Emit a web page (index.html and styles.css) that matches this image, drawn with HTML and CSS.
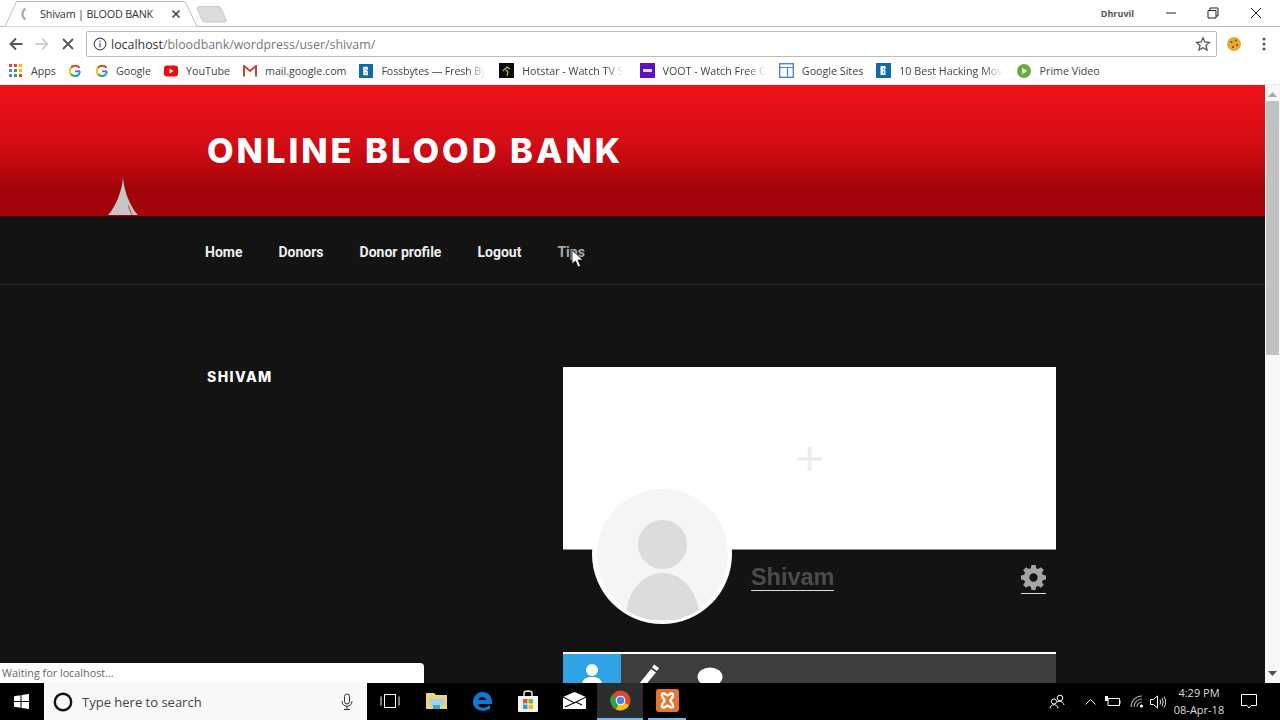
FILE: index.html
```html
<!DOCTYPE html>
<html lang="en">
<head>
<meta charset="utf-8">
<title>Shivam | BLOOD BANK</title>
<link rel="stylesheet" href="styles.css">
</head>
<body>
<div class="screen">
  <div class="chrome">
    <div class="tabstrip">
      <svg class="tabshape" width="232" height="27" viewBox="0 0 232 27"><path d="M0 26.500H5L16.500 1.500H185L197 26.500" fill="#fff" stroke="#bdbdbd"/><path d="M197 8.500a2 2 0 0 1 2-2H218q2 0 3 2l5 11q1 2.500-2 2.500H205q-2 0-3-2z" fill="#dcdcdc" stroke="#c8c8c8"/></svg>
      <div class="tab">
        <svg class="spinner" width="16" height="16" viewBox="0 0 16 16"><path d="M11.500 2.500A6.500 6.500 0 0 0 11.500 13.500" fill="none" stroke="#adb1b5" stroke-width="2.400"/></svg>
        <span class="tabtitle">Shivam | BLOOD BANK</span>
        <svg class="tabclose" width="10" height="10" viewBox="0 0 10 10"><path d="M1.500 1.500l7 7M8.500 1.500l-7 7" stroke="#444" stroke-width="1.600"/></svg>
      </div>
      <div class="winbar">
        <span class="user">Dhruvil</span>
        <span class="winbtn winbtn-min"><svg width="12" height="2" viewBox="0 0 12 2"><path d="M1 1h10" stroke="#222" stroke-width="1"/></svg></span>
        <span class="winbtn"><svg width="12" height="12" viewBox="0 0 12 12"><path d="M3 3V1h8v8H9M1 3.500h8v7.500H1z" fill="none" stroke="#222"/></svg></span>
        <span class="winbtn"><svg width="12" height="12" viewBox="0 0 12 12"><path d="M1 1l10 10M11 1L1 11" stroke="#222"/></svg></span>
      </div>
    </div>
    <div class="toolbar">
      <svg class="navicon" width="16" height="16" viewBox="0 0 16 16"><path d="M14.500 8H2.500M8 2.500L2.500 8 8 13.500" fill="none" stroke="#555" stroke-width="1.800"/></svg>
      <svg class="navicon" width="16" height="16" viewBox="0 0 16 16"><path d="M1.500 8h12M8 2.500L13.500 8 8 13.500" fill="none" stroke="#d2d2d2" stroke-width="1.800"/></svg>
      <svg class="navicon" width="16" height="16" viewBox="0 0 16 16"><path d="M3 3l10 10M13 3L3 13" fill="none" stroke="#555" stroke-width="1.800"/></svg>
      <div class="omnibox">
        <svg width="14" height="14" viewBox="0 0 14 14"><circle cx="7" cy="7" r="5.800" fill="none" stroke="#555" stroke-width="1.200"/><path d="M7 6v4.200M7 3.700v1.300" stroke="#555" stroke-width="1.300"/></svg>
        <span class="url"><span class="host">localhost</span>/bloodbank/wordpress/user/shivam/</span>
        <svg class="star" width="16" height="16" viewBox="0 0 16 16"><path d="M8 1.800l1.900 4.200 4.500.5-3.400 3 1 4.500L8 11.700l-4 2.300 1-4.500-3.400-3 4.500-.5z" fill="none" stroke="#555" stroke-width="1.300"/></svg>
      </div>
      <svg class="cookie" width="16" height="16" viewBox="0 0 16 16"><circle cx="8" cy="8" r="7" fill="#e8a63c"/><circle cx="5.500" cy="6" r="1" fill="#7a3d10"/><circle cx="10" cy="4.500" r=".9" fill="#7a3d10"/><circle cx="11" cy="9" r="1" fill="#7a3d10"/><circle cx="7" cy="11" r="1" fill="#7a3d10"/></svg>
      <svg class="menu" width="4" height="14" viewBox="0 0 4 14"><circle cx="2" cy="2" r="1.500" fill="#555"/><circle cx="2" cy="7" r="1.500" fill="#555"/><circle cx="2" cy="12" r="1.500" fill="#555"/></svg>
    </div>
    <div class="bookmarks">
      <span class="bm"><svg width="14" height="14" viewBox="0 0 14 14"><g><rect x="0" y="0" width="3" height="3" fill="#e94335"/><rect x="5" y="0" width="3" height="3" fill="#e94335"/><rect x="10" y="0" width="3" height="3" fill="#fbbc05"/><rect x="0" y="5" width="3" height="3" fill="#4285f4"/><rect x="5" y="5" width="3" height="3" fill="#34a853"/><rect x="10" y="5" width="3" height="3" fill="#fbbc05"/><rect x="0" y="10" width="3" height="3" fill="#4285f4"/><rect x="5" y="10" width="3" height="3" fill="#34a853"/><rect x="10" y="10" width="3" height="3" fill="#ea4335"/></g></svg><span>Apps</span></span>
      <span class="bm bm-g"><svg width="12" height="12" viewBox="0 0 12 12"><use href="#gicon"/></svg></span>
      <span class="bm"><svg width="12" height="12" viewBox="0 0 12 12"><defs><g id="gicon"><path d="M10.500 2.800A5.300 5.300 0 0 0 2 2.800" fill="none" stroke="#ea4335" stroke-width="2"/><path d="M2 2.600A5.300 5.300 0 0 0 2 9.400" fill="none" stroke="#fbbc05" stroke-width="2"/><path d="M2 9.200A5.300 5.300 0 0 0 9.800 9.500" fill="none" stroke="#34a853" stroke-width="2"/><path d="M6 6.200h5M10.800 6.200A5.300 5.300 0 0 1 9.600 9.600" fill="none" stroke="#4285f4" stroke-width="2"/></g></defs><use href="#gicon"/></svg><span>Google</span></span>
      <span class="bm"><svg width="14" height="12" viewBox="0 0 14 12"><rect width="14" height="11" y=".5" rx="3" fill="#e8100e"/><path d="M5.500 3.500l4 2.500-4 2.500z" fill="#fff"/></svg><span>YouTube</span></span>
      <span class="bm"><svg width="14" height="12" viewBox="0 0 14 12"><path d="M1 11.500V1l6 5 6-5v10.500" fill="none" stroke="#c0493c" stroke-width="2"/></svg><span>mail.google.com</span></span>
      <span class="bm"><svg width="14" height="14" viewBox="0 0 15 15"><use href="#bicon"/></svg><span class="fade tight">Fossbytes — Fresh By</span></span>
      <span class="bm bm-hot"><svg width="15" height="15" viewBox="0 0 15 15"><rect width="15" height="15" fill="#0b0b0b"/><path d="M4 8l4-4 3 2M7 7l2 2-1 4" fill="none" stroke="#b9c23a" stroke-width="1.200"/></svg><span class="fade">Hotstar - Watch TV S</span></span>
      <span class="bm"><svg width="15" height="15" viewBox="0 0 15 15"><rect width="15" height="15" fill="#5a12c4"/><rect x="3" y="6" width="9" height="3" fill="#e4d8f6"/></svg><span class="fade">VOOT - Watch Free C</span></span>
      <span class="bm"><svg width="15" height="15" viewBox="0 0 15 15"><rect x=".7" y=".7" width="13.600" height="13.600" fill="#fff" stroke="#4a86d8" stroke-width="1.400"/><path d="M1 4.500h13M8.500 4.500V14" stroke="#4a86d8" stroke-width="1.200"/></svg><span>Google Sites</span></span>
      <span class="bm"><svg width="15" height="15" viewBox="0 0 15 15"><defs><g id="bicon"><rect width="15" height="15" fill="#0f6aa8"/><path d="M4.500 3h5v3.500h-1v1h1V12h-5zM7 5v1.500h1V5zM7 8.500V10h1V8.500z" fill="#fff" fill-rule="evenodd"/></g></defs><use href="#bicon"/></svg><span class="fade">10 Best Hacking Mov</span></span>
      <span class="bm bm-prime"><svg width="14" height="14" viewBox="0 0 14 14"><circle cx="7" cy="7" r="7" fill="#6aa83a"/><path d="M5.200 3.800l5 3.200-5 3.200z" fill="#fff"/></svg><span>Prime Video</span></span>
    </div>
  </div>

  <div class="viewport">
    <div class="page">
      <header class="banner">
        <svg class="spire" width="32" height="40" viewBox="0 0 32 40"><path d="M16 0C17 16 25 32 31 38H1C7 32 15 16 16 0z" fill="#c6c6c6"/><path d="M21 28l4 10" stroke="#a33" stroke-width=".8"/></svg>
        <h1 class="sitetitle">ONLINE BLOOD BANK</h1>
      </header>
      <nav class="mainnav">
        <a>Home</a><a>Donors</a><a>Donor profile</a><a>Logout</a><a class="dim">Tips</a>
      </nav>
      <main class="content">
        <h2 class="pagetitle">SHIVAM</h2>
        <section class="profile">
          <div class="cover"><span class="plus">+</span></div>
          <div class="identity">
            <div class="avatar">
              <svg width="131" height="131" viewBox="0 0 131 131"><circle cx="65.500" cy="65.500" r="65.500" fill="#f5f5f5"/><circle cx="65.500" cy="55.500" r="24.500" fill="#dcdcdc"/><path d="M29 121C33 100 47 84 65.500 84S98 100 102 121A65.500 65.500 0 0 1 29 121z" fill="#dcdcdc"/></svg>
            </div>
            <a class="username">Shivam</a>
            <span class="gear">
              <svg width="25" height="25" viewBox="0 0 24 24"><path fill="#a4a4a4" fill-rule="evenodd" d="M10 0h4l.6 3.100 1.900.8L19.100 2.100l2.800 2.800-1.800 2.600.8 1.900L24 10v4l-3.100.6-.8 1.900 1.800 2.600-2.800 2.800-2.600-1.800-1.900.8L14 24h-4l-.6-3.100-1.900-.8-2.600 1.800-2.800-2.800 1.800-2.600-.8-1.900L0 14v-4l3.100-.6.800-1.900L2.100 4.900l2.800-2.800 2.600 1.800 1.900-.8zM12 8a4 4 0 1 0 0 8 4 4 0 0 0 0-8z"/></svg>
            </span>
          </div>
          <div class="tabsbar">
            <span class="ptab active"><svg width="24" height="30" viewBox="0 0 24 30"><circle cx="12" cy="8" r="6" fill="#fff"/><path d="M2 24c0-7 4-9 10-9s10 2 10 9z" fill="#fff"/></svg></span>
            <span class="ptab ptab-pen"><svg width="24" height="30" viewBox="0 0 24 30"><path d="M18 2.500l5 3.500-2 3-5-3.500zM15 7l5 3.500L7 26l-6 1.500L3 22z" fill="#fff"/></svg></span>
            <span class="ptab ptab-chat"><svg width="26" height="30" viewBox="0 0 26 30"><ellipse cx="13" cy="13" rx="12.500" ry="9.500" fill="#fff"/></svg></span>
          </div>
        </section>
      </main>
    </div>
    <div class="scrollbar">
      <svg width="9" height="5" viewBox="0 0 9 5"><path d="M4.500 0L9 5H0z" fill="#a8a8a8"/></svg>
      <div class="thumb"></div>
      <svg class="downarrow" width="9" height="5" viewBox="0 0 9 5"><path d="M0 0h9L4.500 5z" fill="#505050"/></svg>
    </div>
    <div class="status">Waiting for localhost...</div>
    <svg class="cursor" width="13" height="19" viewBox="0 0 13 19"><path d="M1 1v14l3.500-3 2.500 6 2.500-1-2.500-6H12z" fill="#fff" stroke="#111" stroke-width=".8"/></svg>
  </div>

  <footer class="taskbar">
    <svg class="start" width="15" height="15" viewBox="0 0 15 15"><path d="M0 2.200L6.500 1.200V7H0zM7.500 1L15 0v7H7.500zM0 8h6.500v5.800L0 12.800zM7.500 8H15v7l-7.500-1z" fill="#fff"/></svg>
    <div class="search">
      <svg width="20" height="20" viewBox="0 0 20 20"><circle cx="10" cy="10" r="8.200" fill="none" stroke="#111" stroke-width="2.400"/></svg>
      <span class="searchtext">Type here to search</span>
      <svg class="mic" width="12" height="18" viewBox="0 0 12 18"><rect x="3.500" y="1" width="5" height="10" rx="2.500" fill="none" stroke="#333"/><path d="M1 8c0 7 10 7 10 0M6 13v3M3 16.500h6" fill="none" stroke="#333"/></svg>
    </div>
    <div class="tasks">
      <span class="task"><svg width="20" height="14" viewBox="0 0 20 14"><rect x="4.500" y=".5" width="11" height="13" fill="none" stroke="#fff"/><path d="M1 2.500v9M19 2.500v9" stroke="#fff"/></svg></span>
      <span class="task"><svg width="21" height="17" viewBox="0 0 21 17"><path d="M0 1h8l2 2h11v14H0z" fill="#f3d376"/><rect x="3" y="7" width="15" height="7" fill="#9cd4ec"/><rect x="7" y="13" width="7" height="4" fill="#3aa5d8"/></svg></span>
      <span class="task"><svg width="20" height="20" viewBox="0 0 20 20"><path fill="#0f78d4" d="M10 1c6 0 10 4 10 10v2H6c.3 4 6 5 12 1v4c-8 4-17 1-17-7C1 6 5 1 10 1zm4 8c0-4-7-4-8 0z"/></svg></span>
      <span class="task"><svg width="22" height="22" viewBox="0 0 22 22"><path d="M1 6h20v15q0 1-1 1H2q-1 0-1-1z" fill="#f4f4f4"/><path d="M7 6V3q0-2 4-2t4 2v3" fill="none" stroke="#f4f4f4" stroke-width="1.400"/><rect x="6" y="9" width="4.500" height="4.500" fill="#e8532c"/><rect x="11.500" y="9" width="4.500" height="4.500" fill="#7cb63c"/><rect x="6" y="14.500" width="4.500" height="4.500" fill="#2b9ee0"/><rect x="11.500" y="14.500" width="4.500" height="4.500" fill="#f5b81d"/></svg></span>
      <span class="task"><svg width="23" height="17" viewBox="0 0 23 17"><path d="M0 5L11.500 0 23 5v12H0z" fill="#fff"/><path d="M0 5l11.500 6L23 5M2 15l11-5 6 3" fill="none" stroke="#000" stroke-width="1.100"/></svg></span>
      <span class="task running focused"><svg width="21" height="21" viewBox="0 0 48 48"><circle cx="24" cy="24" r="23" fill="#e0452f"/><path d="M24 24L44 35A23 23 0 0 1 13 44z" fill="#f4c20d"/><path d="M24 24L13 44A23 23 0 0 1 4 12z" fill="#2fa04e"/><circle cx="24" cy="24" r="11" fill="#fff"/><circle cx="24" cy="24" r="8.500" fill="#4a84e8"/></svg></span>
      <span class="task running xampp"><svg width="23" height="23" viewBox="0 0 24 24"><rect width="24" height="24" rx="2.500" fill="#e2762c"/><path d="M6.500 5c3-1.500 3.500 1.500 5.500 1.500S14.500 3.500 17.500 5c2 3-2.500 5-2.500 7s4.500 4 2.500 7c-3 1.500-3.500-1.500-5.500-1.500S9.500 20.500 6.500 19c-2-3 2.500-5 2.500-7S4.500 8 6.500 5z" fill="none" stroke="#fff" stroke-width="2.500"/></svg></span>
    </div>
    <div class="tray">
      <svg class="people" width="16" height="15" viewBox="0 0 16 15"><circle cx="11" cy="4" r="2.800" fill="none" stroke="#fff"/><circle cx="5" cy="7.500" r="2.600" fill="none" stroke="#fff"/><path d="M1 14.500c0-5 8-5 8 0M8 8c2-1 6-1 7 3" fill="none" stroke="#fff"/></svg>
      <svg class="chev" width="11" height="6" viewBox="0 0 11 6"><path d="M.5 5.500l5-5 5 5" fill="none" stroke="#eee"/></svg>
      <svg class="batt" width="16" height="13" viewBox="0 0 16 13"><path d="M3 3.500h11.500v7H3z" fill="none" stroke="#fff"/><path d="M15 5.500v3" stroke="#fff"/><rect x="0" y="1" width="3" height="5" fill="#fff"/></svg>
      <svg class="wifi" width="14" height="13" viewBox="0 0 14 13"><path d="M1 12A11 11 0 0 1 12 1M4 12A8 8 0 0 1 12 4M7 12A5 5 0 0 1 12 7" fill="none" stroke="#aaa" stroke-width="1.100"/><circle cx="11.500" cy="11" r="1.600" fill="#fff"/></svg>
      <svg class="vol" width="16" height="14" viewBox="0 0 16 14"><path d="M.5 4.500h3L7.500 1v12L3.500 9.500h-3z" fill="none" stroke="#fff"/><path d="M10 4.500q1.500 2.500 0 5M12 3q2.500 4 0 8M14 1.500q3.500 5.500 0 11" fill="none" stroke="#ddd"/></svg>
      <div class="clock"><span>4:29 PM</span><span>08-Apr-18</span></div>
      <svg class="notif" width="16" height="15" viewBox="0 0 16 15"><path d="M.5.500h15v11H10l-2 2.500-2-2.500H.5z" fill="none" stroke="#fff"/></svg>
    </div>
  </footer>
</div>
</body>
</html>
```
FILE: styles.css
```css
* { box-sizing: border-box; }
html, body { margin: 0; height: 100%; overflow: hidden; }
body { font-family: "Open Sans", "Liberation Sans", sans-serif; background: #fff; }
svg { display: block; flex: none; }
.screen { width: 1280px; height: 720px; display: flex; flex-direction: column; overflow: hidden; }

/* browser chrome */
.chrome { height: 85px; flex: none; background: #fff; }
.tabstrip { position: relative; height: 27px; display: flex; align-items: flex-start; border-bottom: 1px solid #bdbdbd; }
.tabshape { position: absolute; left: 0; top: 0; }
.tab { position: relative; width: 196px; padding: 6px 0 0 14px; display: flex; align-items: center; }
.spinner { margin-right: 10px; }
.tabtitle { font-size: 10.800px; line-height: 16px; color: #333; width: 114px; white-space: nowrap; letter-spacing: -.2px; }
.tabclose { margin-left: 17px; }
.winbar { margin-left: auto; display: flex; align-items: center; height: 26px; padding-right: 3px; }
.user { font-size: 9px; font-weight: 700; color: #555; margin-right: 14px; text-shadow: 0 0 2px #fff; }
.winbtn { width: 43px; height: 26px; display: flex; align-items: center; justify-content: center; }
.winbtn-min { width: 41px; margin-left: 2px; }
.toolbar { height: 30px; display: flex; align-items: center; padding: 4px 0 0 8px; }
.navicon { margin-right: 10px; }
.omnibox { width: 1131px; height: 26px; border: 1px solid #bcbcbc; border-radius: 2px; display: flex; align-items: center; padding: 0 5px 0 6px; }
.url { margin-left: 4px; font-size: 12.400px; color: #777; }
.host { color: #333; }
.star { margin-left: auto; }
.cookie { margin-left: 9px; }
.menu { margin-left: 20px; }
.bookmarks { height: 28px; display: flex; align-items: center; padding-left: 9px; gap: 13px; border-bottom: 1px solid #e8e8e8; }
.bm { display: flex; align-items: center; gap: 8px; font-size: 10.700px; color: #444; white-space: nowrap; }
.bm-g { margin-right: 2px; }
.bm-hot { margin-right: 3px; }
.bm-prime { margin-left: 1px; gap: 9px; }
.tight { letter-spacing: -.15px; }
.fade { display: block; -webkit-mask-image: linear-gradient(90deg, #000 82%, transparent); mask-image: linear-gradient(90deg, #000 82%, transparent); }

/* page */
.viewport { position: relative; height: 598px; flex: none; display: flex; overflow: hidden; }
.page { width: 1265px; flex: none; background: #131313; overflow: hidden; }
.banner { position: relative; height: 132px; padding-left: 207px; display: flex; align-items: center; background: linear-gradient(180deg, #ee1218 0, #d40c14 45%, #a00308 80%, #a3050b 99%, #1a0405 100%); }
.spire { position: absolute; left: 107px; bottom: 0; }
.sitetitle { margin: 0; font: 800 34.500px/1 Inter, "Liberation Sans", sans-serif; letter-spacing: 2.950px; color: #fff; white-space: nowrap; }
.mainnav { height: 68px; border-bottom: 1px solid #2a2a2a; display: flex; align-items: center; padding: 2px 0 0 205px; gap: 36px; }
.mainnav a { font: 700 14px/20px Roboto, "Liberation Sans", sans-serif; color: #eee; }
.mainnav a.dim { color: #a9a9a9; }
.content { display: flex; align-items: flex-start; padding: 82px 0 0 207px; }
.pagetitle { width: 356px; margin: 0; padding-top: 1px; font: 800 14px/18px Inter, "Liberation Sans", sans-serif; letter-spacing: 1.400px; color: #fff; }
.profile { width: 493px; }
.cover { height: 183px; background: #fff; border-bottom: 1px solid #8c8c8c; display: flex; align-items: center; justify-content: center; }
.plus { font: 400 50px/1 "Liberation Sans", sans-serif; color: #ececec; }
.identity { position: relative; height: 102px; display: flex; align-items: flex-start; padding: 14px 10px 0 188px; }
.avatar { position: absolute; left: 29px; top: -66px; width: 140px; height: 140px; border-radius: 50%; background: #fff; display: flex; align-items: center; justify-content: center; }
.username { font: 700 23.400px/26px "Liberation Sans", sans-serif; color: #4b4b4b; border-bottom: 1px solid #ddd; }
.gear { margin-left: auto; border-bottom: 1.500px solid #ddd; padding-bottom: 3px; margin-top: 1px; }
.tabsbar { height: 60px; background: #3e3e3e; border-top: 2px solid #fff; display: flex; }
.ptab { width: 58px; display: flex; justify-content: center; padding-top: 8px; }
.ptab.active { background: #2fa3e6; }
.ptab-pen { padding-right: 4px; }
.ptab-chat { padding: 10px 0 0 3px; }

/* scrollbar */
.scrollbar { flex: 1; background: #f7f7f7; display: flex; flex-direction: column; align-items: center; padding-top: 7px; }
.thumb { width: 13px; height: 254px; background: #c2c2c2; margin-top: 4px; }
.downarrow { margin-top: auto; margin-bottom: 7px; }
.status { position: absolute; left: 0; bottom: 0; width: 424px; height: 20px; background: #fff; border-top-right-radius: 4px; padding-left: 2px; font-size: 10.800px; line-height: 20px; color: #666; }
.cursor { position: absolute; left: 571px; top: 164px; }

/* taskbar */
.taskbar { height: 37px; flex: none; background: #000; display: flex; align-items: center; color: #fff; }
.start { margin-left: 14px; }
.search { margin-left: 15px; width: 323px; height: 37px; background: #f8f8f8; display: flex; align-items: center; padding: 0 14px 0 9px; }
.searchtext { margin-left: 9px; font-size: 13px; color: #444; }
.mic { margin-left: auto; }
.tasks { display: flex; height: 37px; }
.task { width: 46px; height: 37px; display: flex; align-items: center; justify-content: center; border-bottom: 2px solid transparent; }
.task.running { border-bottom-color: #76b9ed; }
.task.focused { background: #2b2d2f; }
.xampp { width: 38px; margin-left: 5px; }
.tray { margin-left: auto; display: flex; align-items: center; height: 37px; }
.people { margin-right: 20px; }
.chev { margin-right: 9px; }
.batt { margin-right: 9px; }
.wifi { margin-right: 6px; }
.vol { margin-right: 6px; }
.clock { width: 54px; display: flex; flex-direction: column; align-items: center; font-size: 11px; line-height: 17px; color: #ddd; margin: 0 15px 2px 0; white-space: nowrap; }
.notif { margin-right: 23px; }
```
